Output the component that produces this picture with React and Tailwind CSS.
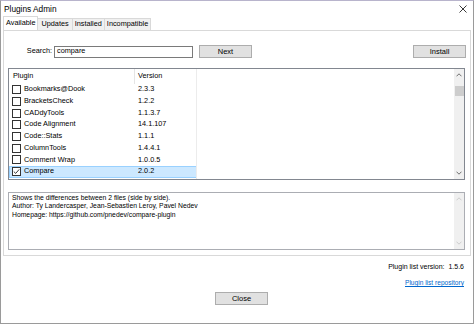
import React from "react";

const plugins = [
  { name: "Bookmarks@Dook", version: "2.3.3" },
  { name: "BracketsCheck", version: "1.2.2" },
  { name: "CADdyTools", version: "1.1.3.7" },
  { name: "Code Alignment", version: "14.1.107" },
  { name: "Code::Stats", version: "1.1.1" },
  { name: "ColumnTools", version: "1.4.4.1" },
  { name: "Comment Wrap", version: "1.0.0.5" },
  { name: "Compare", version: "2.0.2", checked: true },
];

function Checkbox({ checked }) {
  return (
    <div className="w-[9px] h-[9px] border border-[#333] bg-white flex items-center justify-center shrink-0">
      {checked && (
        <svg width="7" height="7" viewBox="0 0 7 7">
          <path d="M0.8 3.6 L2.7 5.4 L6.2 1.4" fill="none" stroke="#222" strokeWidth="0.9" />
        </svg>
      )}
    </div>
  );
}

function Scrollbar({ faint, thumb }) {
  const arrow = faint ? "#c8c8c8" : "#606060";
  return (
    <div className="w-[10px] h-full bg-[#f0f0f0] flex flex-col items-center shrink-0">
      <div className="h-[12px] flex items-center">
        <svg width="6" height="4" viewBox="0 0 6 4">
          <path d="M0.5 3.3 L3 0.8 L5.5 3.3" fill="none" stroke={arrow} strokeWidth="0.9" />
        </svg>
      </div>
      {thumb && <div className="w-[9px] h-[10px] bg-[#cdcdcd] mt-[5px]" />}
      <div className="flex-1" />
      <div className="h-[12px] flex items-center">
        <svg width="6" height="4" viewBox="0 0 6 4">
          <path d="M0.5 0.7 L3 3.2 L5.5 0.7" fill="none" stroke={arrow} strokeWidth="0.9" />
        </svg>
      </div>
    </div>
  );
}

function Button({ children, className }) {
  return (
    <div className={"h-[13px] w-[53px] bg-[#e1e1e1] border border-[#adadad] flex items-center justify-center text-[7.5px] " + className}>
      {children}
    </div>
  );
}

export default function App() {
  return (
    <div
      className="w-[474px] h-[326px] bg-white text-black overflow-hidden"
      style={{ fontFamily: '"Liberation Sans", Arial, sans-serif' }}
    >
      <div className="h-[324px] border border-[#9a9a9a] border-t-[#b8b4cc] flex flex-col">
        {/* title bar */}
        <div className="h-[16px] flex items-center justify-between pl-[3px] pr-[6px] shrink-0">
          <span className="text-[8.3px]">Plugins Admin</span>
          <svg width="8" height="8" viewBox="0 0 8 8">
            <path d="M0.5 0.5 L7.5 7.5 M7.5 0.5 L0.5 7.5" stroke="#222" strokeWidth="0.9" />
          </svg>
        </div>

        {/* tabs */}
        <div className="h-[13px] flex items-end pl-[2px] text-[7.3px] shrink-0 relative z-10">
          <div className="h-[14px] px-[2px] bg-white border border-b-0 border-[#d9d9d9] flex items-center">Available</div>
          <div className="h-[12px] px-[3px] bg-[#f0f0f0] border border-b-0 border-l-0 border-[#d9d9d9] flex items-center">Updates</div>
          <div className="h-[12px] px-[2px] bg-[#f0f0f0] border border-b-0 border-l-0 border-[#d9d9d9] flex items-center">Installed</div>
          <div className="h-[12px] px-[2px] bg-[#f0f0f0] border border-b-0 border-l-0 border-[#d9d9d9] flex items-center">Incompatible</div>
        </div>

        {/* tab panel */}
        <div className="mx-[2px] h-[226px] border border-[#d9d9d9] bg-white flex flex-col shrink-0 text-[7.3px]">
          <div className="mt-[14px] h-[13px] flex items-center pr-[4px]">
            <div className="w-[50px] text-right pr-[2px]">Search:</div>
            <div className="w-[139px] h-[12px] border border-[#7a7a7a] flex items-center pl-[2px]">compare</div>
            <Button className="ml-[6px]">Next</Button>
            <div className="flex-1" />
            <Button>Install</Button>
          </div>

          {/* plugin list */}
          <div className="mt-[10px] ml-[4px] w-[457px] h-[112px] border border-[#828790] flex">
            <div className="flex-1 relative">
              <div className="absolute left-[187px] top-0 bottom-0 w-px bg-[#ececec]" />
              <div className="h-[15px] flex items-center">
                <div className="w-[126px] pl-[4px] border-r border-[#e5e5e5] h-full flex items-center">Plugin</div>
                <div className="w-[62px] pl-[3px] h-full flex items-center">Version</div>
              </div>
              {plugins.map((p) => (
                <div
                  key={p.name}
                  className={
                    "h-[11.7px] w-[188px] flex items-center " +
                    (p.checked ? "bg-[#cce8ff] border border-[#99d1ff]" : "border border-transparent")
                  }
                >
                  <div className="w-[125px] flex items-center pl-[2px] gap-[3px]">
                    <Checkbox checked={p.checked} />
                    <span>{p.name}</span>
                  </div>
                  <div className="pl-[3px]">{p.version}</div>
                </div>
              ))}
            </div>
            <Scrollbar thumb />
          </div>

          {/* description */}
          <div className="mt-[12px] ml-[4px] w-[457px] h-[58px] border border-[#abadb3] flex">
            <div className="flex-1 pl-[3px] pt-[1px] text-[6.8px] leading-[8.3px]">
              <div>Shows the differences between 2 files (side by side).</div>
              <div>Author: Ty Landercasper, Jean-Sebastien Leroy, Pavel Nedev</div>
              <div>Homepage: https://github.com/pnedev/compare-plugin</div>
            </div>
            <Scrollbar faint />
          </div>
        </div>

        {/* footer */}
        <div className="flex-1 flex flex-col pr-[9px]">
          <div className="mt-[6px] h-[10px] flex items-center self-end text-[7px]">Plugin list version:&nbsp; 1.5.6</div>
          <div className="mt-[6px] h-[10px] flex items-center self-end text-[6.6px] text-[#0066cc] underline">Plugin list repository</div>
          <Button className="mt-[4px] ml-[214px]">Close</Button>
        </div>
      </div>
    </div>
  );
}
